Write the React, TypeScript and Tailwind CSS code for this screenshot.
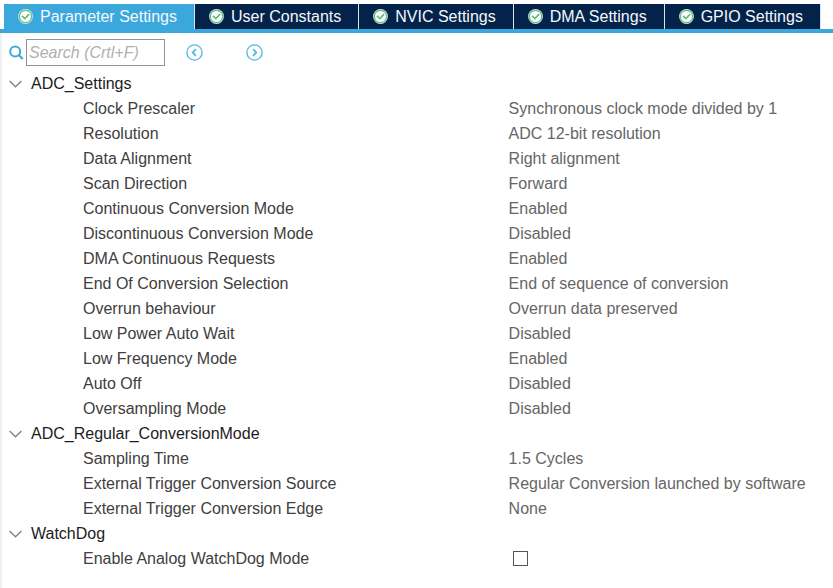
import { useState } from "react";

interface Parameter {
  name: string;
  value: string | boolean;
}

interface ParameterGroup {
  title: string;
  parameters: Parameter[];
}

const tabs = [
  "Parameter Settings",
  "User Constants",
  "NVIC Settings",
  "DMA Settings",
  "GPIO Settings",
];

const groups: ParameterGroup[] = [
  {
    title: "ADC_Settings",
    parameters: [
      { name: "Clock Prescaler", value: "Synchronous clock mode divided by 1" },
      { name: "Resolution", value: "ADC 12-bit resolution" },
      { name: "Data Alignment", value: "Right alignment" },
      { name: "Scan Direction", value: "Forward" },
      { name: "Continuous Conversion Mode", value: "Enabled" },
      { name: "Discontinuous Conversion Mode", value: "Disabled" },
      { name: "DMA Continuous Requests", value: "Enabled" },
      { name: "End Of Conversion Selection", value: "End of sequence of conversion" },
      { name: "Overrun behaviour", value: "Overrun data preserved" },
      { name: "Low Power Auto Wait", value: "Disabled" },
      { name: "Low Frequency Mode", value: "Enabled" },
      { name: "Auto Off", value: "Disabled" },
      { name: "Oversampling Mode", value: "Disabled" },
    ],
  },
  {
    title: "ADC_Regular_ConversionMode",
    parameters: [
      { name: "Sampling Time", value: "1.5 Cycles" },
      {
        name: "External Trigger Conversion Source",
        value: "Regular Conversion launched by software",
      },
      { name: "External Trigger Conversion Edge", value: "None" },
    ],
  },
  {
    title: "WatchDog",
    parameters: [{ name: "Enable Analog WatchDog Mode", value: false }],
  },
];

function CheckBadge() {
  return (
    <svg viewBox="0 0 15 15" className="size-[15px] shrink-0" aria-hidden>
      <circle cx="7.5" cy="7.5" r="7.4" fill="#d9f0e0" />
      <circle cx="7.5" cy="7.5" r="6.2" fill="#fff" stroke="#62bd84" strokeWidth="1.3" />
      <path d="M4 6.8 6.9 9.6 11.2 5.2" fill="none" stroke="#62bd84" strokeWidth="1.8" />
    </svg>
  );
}

function SearchIcon() {
  return (
    <svg viewBox="0 0 15 15" className="size-[15px] shrink-0" aria-hidden>
      <circle cx="6.2" cy="6.4" r="5" fill="none" stroke="#3fa9dc" strokeWidth="2" />
      <path d="m9.8 10 4 4" stroke="#3fa9dc" strokeWidth="2.4" />
    </svg>
  );
}

function CircleArrow({ direction }: { direction: "previous" | "next" }) {
  return (
    <svg viewBox="0 0 17 17" className="size-[17px]" fill="none" stroke="#5ab8e6" aria-hidden>
      <circle cx="8.5" cy="8.5" r="7.6" strokeWidth="1.4" />
      <path
        d={direction === "previous" ? "M9.9 5.2 6.7 8.5l3.2 3.3" : "m7.1 5.2 3.2 3.3-3.2 3.3"}
        strokeWidth="1.8"
      />
    </svg>
  );
}

function TabBar({ active, onSelect }: { active: string; onSelect: (tab: string) => void }) {
  return (
    <div role="tablist" className="flex border-b-4 border-[#3aa8dc] pt-1 pl-1">
      {tabs.map((tab) => (
        <button
          key={tab}
          type="button"
          role="tab"
          aria-selected={tab === active}
          onClick={() => onSelect(tab)}
          className={`flex h-[25px] items-center gap-[7px] border-r border-[#dde2e8] pr-[17px] pl-3.5 whitespace-nowrap text-[#f4f8fb] ${
            tab === active ? "bg-[#3aa8dc]" : "bg-[#03234b]"
          }`}
        >
          <CheckBadge />
          {tab}
        </button>
      ))}
    </div>
  );
}

function Toolbar() {
  return (
    <div className="flex items-center pt-1.5 pb-[5px] pl-[7px]">
      <label htmlFor="search" aria-label="Search" className="mr-0.5">
        <SearchIcon />
      </label>
      <input
        id="search"
        type="text"
        placeholder="Search (Crtl+F)"
        className="h-[27px] w-[139px] border border-[#8b959e] px-0.5 italic outline-none placeholder:text-[#b0b0b0]"
      />
      <button type="button" aria-label="Previous match" className="ml-[21px]">
        <CircleArrow direction="previous" />
      </button>
      <button type="button" aria-label="Next match" className="ml-[43px]">
        <CircleArrow direction="next" />
      </button>
    </div>
  );
}

function Group({ group }: { group: ParameterGroup }) {
  const [open, setOpen] = useState(true);

  return (
    <tbody>
      <tr className="h-[25px]">
        <th colSpan={2} className="p-0 text-left font-normal">
          <button
            type="button"
            aria-expanded={open}
            onClick={() => setOpen(!open)}
            className="flex items-center gap-[9px] pl-[7px] text-[#1c1c1c]"
          >
            <svg
              viewBox="0 0 13 8"
              className={`h-2 w-[13px] ${open ? "" : "-rotate-90"}`}
              fill="none"
              stroke="#808080"
              strokeWidth="1.3"
              aria-hidden
            >
              <path d="M.6 1 6.5 6.8 12.4 1" />
            </svg>
            {group.title}
          </button>
        </th>
      </tr>
      {open &&
        group.parameters.map(({ name, value }) => (
          <tr key={name} className="h-[25px]">
            <th scope="row" className="p-0 pl-[81px] text-left font-normal text-[#404040]">
              {typeof value === "boolean" ? <label htmlFor="watchdog">{name}</label> : name}
            </th>
            <td className="p-0 pl-2 text-[#666]">
              {typeof value === "boolean" ? (
                <input
                  id="watchdog"
                  type="checkbox"
                  defaultChecked={value}
                  className="ml-1 block size-[15px] appearance-none border border-[#555] bg-white checked:bg-[#3aa8dc]"
                />
              ) : (
                value
              )}
            </td>
          </tr>
        ))}
    </tbody>
  );
}

export default function App() {
  const [active, setActive] = useState(tabs[0]);

  return (
    <main className="flex min-h-screen flex-col bg-white font-['Liberation_Sans',Arial,sans-serif] text-base leading-6">
      <TabBar active={active} onSelect={setActive} />
      <div className="flex-1 border-l-2 border-[#f0f0f0]">
        <Toolbar />
        <table className="w-full table-fixed border-collapse">
          <colgroup>
            <col className="w-3/5" />
            <col />
          </colgroup>
          {groups.map((group) => (
            <Group key={group.title} group={group} />
          ))}
        </table>
      </div>
    </main>
  );
}
